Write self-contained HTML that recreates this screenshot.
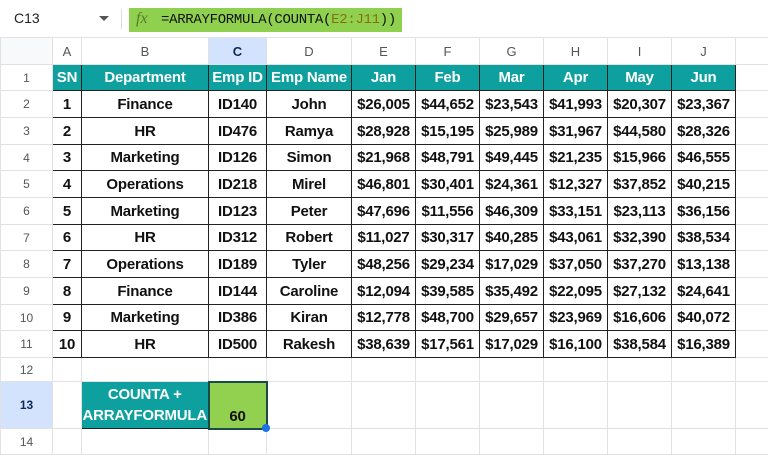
<!DOCTYPE html><html><head><style>
body{margin:0;width:768px;height:454px;overflow:hidden;background:#fff;font-family:"Liberation Sans",sans-serif;position:relative}
.top{position:absolute;left:0;top:0;width:768px;height:37px;background:#fff;border-bottom:1px solid #e0e0e0}
.nb{position:absolute;left:14px;top:10px;font-size:14px;color:#222}
.arr{position:absolute;left:99px;top:16px;border-left:5px solid transparent;border-right:5px solid transparent;border-top:5px solid #555}
.sep{position:absolute;left:121px;top:9px;width:1px;height:20px;background:#ddd}
.fx{position:absolute;left:129px;top:8px;width:273px;height:24px;background:#8fd14f}
.fx i{position:absolute;left:7px;top:2px;font-family:"Liberation Serif",serif;font-size:16px;color:#5a7a2a}
.fx span{position:absolute;left:32px;top:4px;font-family:"Liberation Mono",monospace;font-size:14px;color:#111;letter-spacing:-0.3px}
.fx b{font-weight:normal;color:#8a6d10}
table{position:absolute;left:0;top:37px;border-collapse:collapse;table-layout:fixed;width:775px}
td{padding:0;border:1px solid #e2e2e2;text-align:center;font-size:15px;font-weight:bold;color:#111;overflow:hidden;white-space:nowrap;letter-spacing:-0.2px}
td.rh{color:#555;font-weight:normal;font-size:12px;background:#fff;letter-spacing:0}
tr.ch td{color:#555;font-weight:normal;font-size:13px;background:#fff;letter-spacing:0}
td.d{border:1px solid #222}
td.h{background:#0e9f9f;color:#fff;border:1px solid #222}
.sel{background:#d3e3fd!important;color:#0b2a5a!important;font-weight:bold!important}
</style></head><body>
<div class="top"><div class="nb">C13</div><div class="arr"></div><div class="sep"></div>
<div class="fx"><i>fx</i><span>=ARRAYFORMULA(COUNTA(<b>E2:J11</b>))</span></div></div>
<table id="t"></table>
<script>
var w=[52,29,127,58,85,64,64,64,64,64,64,40];
var h=[27,26,27,27,26,27,27,26,27,27,26,27,24,47,26];
var cols=["","A","B","C","D","E","F","G","H","I","J",""];
var data=[["SN","Department","Emp ID","Emp Name","Jan","Feb","Mar","Apr","May","Jun"],
["1","Finance","ID140","John","$26,005","$44,652","$23,543","$41,993","$20,307","$23,367"],
["2","HR","ID476","Ramya","$28,928","$15,195","$25,989","$31,967","$44,580","$28,326"],
["3","Marketing","ID126","Simon","$21,968","$48,791","$49,445","$21,235","$15,966","$46,555"],
["4","Operations","ID218","Mirel","$46,801","$30,401","$24,361","$12,327","$37,852","$40,215"],
["5","Marketing","ID123","Peter","$47,696","$11,556","$46,309","$33,151","$23,113","$36,156"],
["6","HR","ID312","Robert","$11,027","$30,317","$40,285","$43,061","$32,390","$38,534"],
["7","Operations","ID189","Tyler","$48,256","$29,234","$17,029","$37,050","$37,270","$13,138"],
["8","Finance","ID144","Caroline","$12,094","$39,585","$35,492","$22,095","$27,132","$24,641"],
["9","Marketing","ID386","Kiran","$12,778","$48,700","$29,657","$23,969","$16,606","$40,072"],
["10","HR","ID500","Rakesh","$38,639","$17,561","$17,029","$16,100","$38,584","$16,389"]];
var s="<colgroup>"+w.map(x=>"<col style='width:"+x+"px'>").join("")+"</colgroup>";
s+="<tr class='ch' style='height:"+h[0]+"px'>";
cols.forEach((c,i)=>{s+="<td"+(i==3?" class='sel'":"")+(i==0?" style='background:#f8f9fa'":"")+">"+c+"</td>"});
s+="</tr>";
for(var r=1;r<=14;r++){
 s+="<tr style='height:"+h[r]+"px'><td class='rh"+(r==13?" sel":"")+"'>"+r+"</td>";
 if(r<=11){data[r-1].forEach((v,j)=>{s+="<td class='"+(r==1?"h":"d")+"'>"+v+"</td>"});s+="<td></td>";}
 else if(r==13){s+="<td></td><td class='h' style='line-height:21px;white-space:normal'>COUNTA +<br>ARRAYFORMULA</td><td style='background:#92d050;border:2px solid #1a4a4a;vertical-align:bottom;padding-bottom:3px'>60</td>";for(var k=0;k<8;k++)s+="<td></td>";}
 else{for(var k=0;k<11;k++)s+="<td></td>";}
 s+="</tr>";
}
document.getElementById("t").innerHTML=s;
</script>
<div style="position:absolute;left:262px;top:424px;width:8px;height:8px;border-radius:50%;background:#1a73e8"></div>
</body></html>
